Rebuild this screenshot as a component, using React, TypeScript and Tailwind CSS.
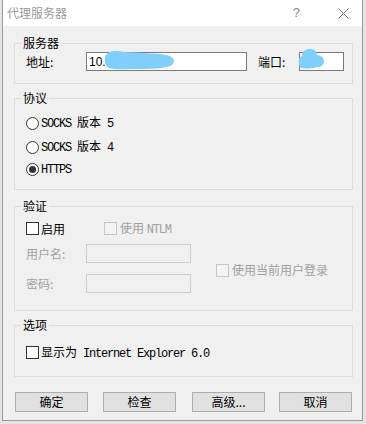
import React from "react";

const ui = { fontFamily: '"Noto Sans CJK SC", "Noto Sans", sans-serif' };
const mono = { fontFamily: '"Liberation Mono", "Noto Sans CJK SC", monospace' };

function Group({ title, children, className = "" }: { title: string; children: React.ReactNode; className?: string }) {
  return (
    <fieldset className={"w-[339px] border border-[#dcdcdc] " + className}>
      <legend className="ml-[6px] px-[2px] text-[12px] leading-[14px] text-black">{title}</legend>
      {children}
    </fieldset>
  );
}

function Check({ disabled = false }: { disabled?: boolean }) {
  return (
    <span
      className={
        "inline-block w-[13px] h-[13px] shrink-0 border " +
        (disabled ? "border-[#c6c6c6] bg-[#f3f3f3]" : "border-[#333333] bg-white")
      }
    />
  );
}

function Radio({ checked = false }: { checked?: boolean }) {
  return (
    <span className="flex items-center justify-center w-[13px] h-[13px] shrink-0 rounded-full border border-[#333333] bg-white">
      {checked && <span className="w-[7px] h-[7px] rounded-full bg-[#333333]" />}
    </span>
  );
}

function MixText({ parts }: { parts: { t: string; m?: boolean }[] }) {
  return (
    <span className="text-[12px] leading-[14px] whitespace-pre">
      {parts.map((p, i) =>
        p.m ? (
          <span key={i} style={mono} className="text-[12px] tracking-[-1.2px]">
            {p.t}
          </span>
        ) : (
          <span key={i}>{p.t}</span>
        )
      )}
    </span>
  );
}

export default function App() {
  return (
    <div className="w-[366px] h-[424px] bg-[#e4e4e4] overflow-hidden pl-[2px]" style={ui}>
      <div className="w-[361px] h-[421px] border border-t-0 border-[#9a9a9a] bg-[#f0f0f0] flex flex-col">
        {/* title bar */}
        <div className="h-[26px] bg-white flex items-center pl-[4px] pr-[13px]">
          <span className="text-[12px] leading-[14px] text-[#999999]">代理服务器</span>
          <span className="ml-auto mr-[38px] text-[13px] text-[#888888]" style={{ fontFamily: '"Liberation Sans", sans-serif' }}>
            ?
          </span>
          <svg width="11" height="11" viewBox="0 0 11 11" className="mt-[1px]">
            <path d="M0.5 0.5 L10.5 10.5 M10.5 0.5 L0.5 10.5" stroke="#777777" strokeWidth="1" />
          </svg>
        </div>

        <div className="pl-[11px] flex flex-col">
          {/* 服务器 */}
          <Group title="服务器" className="mt-[10px]">
            <div className="pt-[2px] pb-[12px] pl-[11px] flex items-center text-[12px] leading-[14px]">
              <span className="w-[60px]">地址:</span>
              <div className="relative w-[161px] h-[19px] border border-[#7a7a7a] bg-white flex items-center pl-[2px]">
                <span className="text-[12px]" style={{ fontFamily: '"Liberation Sans", sans-serif' }}>10.</span>
                <svg className="absolute left-[17px] top-[-3px]" width="72" height="21" viewBox="0 0 72 21">
                  <path
                    d="M4 3 C8 0 14 1 20 2 C34 3 52 3 62 5 C70 7 72 11 68 15 C62 19 46 19 30 19 C20 19 10 20 5 18 C1 16 0 10 1 7 C1.5 5 2.5 4 4 3 Z"
                    fill="#80cffb"
                  />
                </svg>
              </div>
              <span className="ml-[11px] w-[41px]">端口:</span>
              <div className="relative w-[45px] h-[19px] border border-[#7a7a7a] bg-white">
                <svg className="absolute left-[-2px] top-[-5px]" width="27" height="22" viewBox="0 0 27 22">
                  <path
                    d="M4 8 C4 3 8 1 12 1 C16 1 19 3 19 7 C23 7 26 10 26 13 C26 17 23 19 19 19 C14 21 8 21 3 20 C1 18 0 14 1 11 C2 9 3 8 4 8 Z"
                    fill="#80cffb"
                  />
                </svg>
              </div>
            </div>
          </Group>

          {/* 协议 */}
          <Group title="协议" className="mt-[7px]">
            <div className="pt-[6px] pb-[10px] pl-[11px] flex flex-col">
              <div className="h-[24px] flex items-center gap-[2px]">
                <Radio />
                <MixText parts={[{ t: "SOCKS ", m: true }, { t: "版本" }, { t: " 5", m: true }]} />
              </div>
              <div className="h-[24px] flex items-center gap-[2px]">
                <Radio />
                <MixText parts={[{ t: "SOCKS ", m: true }, { t: "版本" }, { t: " 4", m: true }]} />
              </div>
              <div className="h-[20px] flex items-center gap-[2px]">
                <Radio checked />
                <MixText parts={[{ t: "HTTPS", m: true }]} />
              </div>
            </div>
          </Group>

          {/* 验证 */}
          <Group title="验证" className="mt-[9px]">
            <div className="pt-[9px] pb-[17px] pl-[11px] flex flex-col text-[12px] leading-[14px]">
              <div className="h-[13px] flex items-center">
                <div className="w-[78px] flex items-center gap-[2px]">
                  <Check />
                  <span>启用</span>
                </div>
                <div className="flex items-center gap-[3px] text-[#a0a0a0]">
                  <Check disabled />
                  <MixText parts={[{ t: "使用 " }, { t: "NTLM", m: true }]} />
                </div>
              </div>
              <div className="mt-[9px] flex items-center">
                <div className="flex flex-col">
                  <div className="h-[19px] flex items-center">
                    <span className="w-[60px] text-[#a0a0a0]">用户名:</span>
                    <div className="w-[105px] h-[19px] border border-[#cccccc] bg-[#f0f0f0]" />
                  </div>
                  <div className="mt-[11px] h-[19px] flex items-center">
                    <span className="w-[60px] text-[#a0a0a0]">密码:</span>
                    <div className="w-[105px] h-[19px] border border-[#cccccc] bg-[#f0f0f0]" />
                  </div>
                </div>
                <div className="ml-[25px] pt-[3px] flex items-center gap-[3px] text-[#a0a0a0]">
                  <Check disabled />
                  <span>使用当前用户登录</span>
                </div>
              </div>
            </div>
          </Group>

          {/* 选项 */}
          <Group title="选项" className="mt-[7px]">
            <div className="pt-[14px] pb-[17px] pl-[11px]">
              <div className="h-[13px] flex items-center gap-[2px]">
                <Check />
                <MixText parts={[{ t: "显示为" }, { t: " Internet Explorer 6.0", m: true }]} />
              </div>
            </div>
          </Group>

          {/* buttons */}
          <div className="mt-[15px] pl-[1px] flex items-center text-[12px]">
            {["确定", "检查", "高级...", "取消"].map((b, i) => (
              <div
                key={b}
                className={
                  "w-[73px] h-[20px] flex items-center justify-center border border-[#adadad] bg-[#e1e1e1] text-black " +
                  (i === 1 ? "ml-[15px]" : i === 2 ? "ml-[16px]" : i === 3 ? "ml-[14px]" : "")
                }
              >
                {b}
              </div>
            ))}
          </div>
        </div>
      </div>
    </div>
  );
}
